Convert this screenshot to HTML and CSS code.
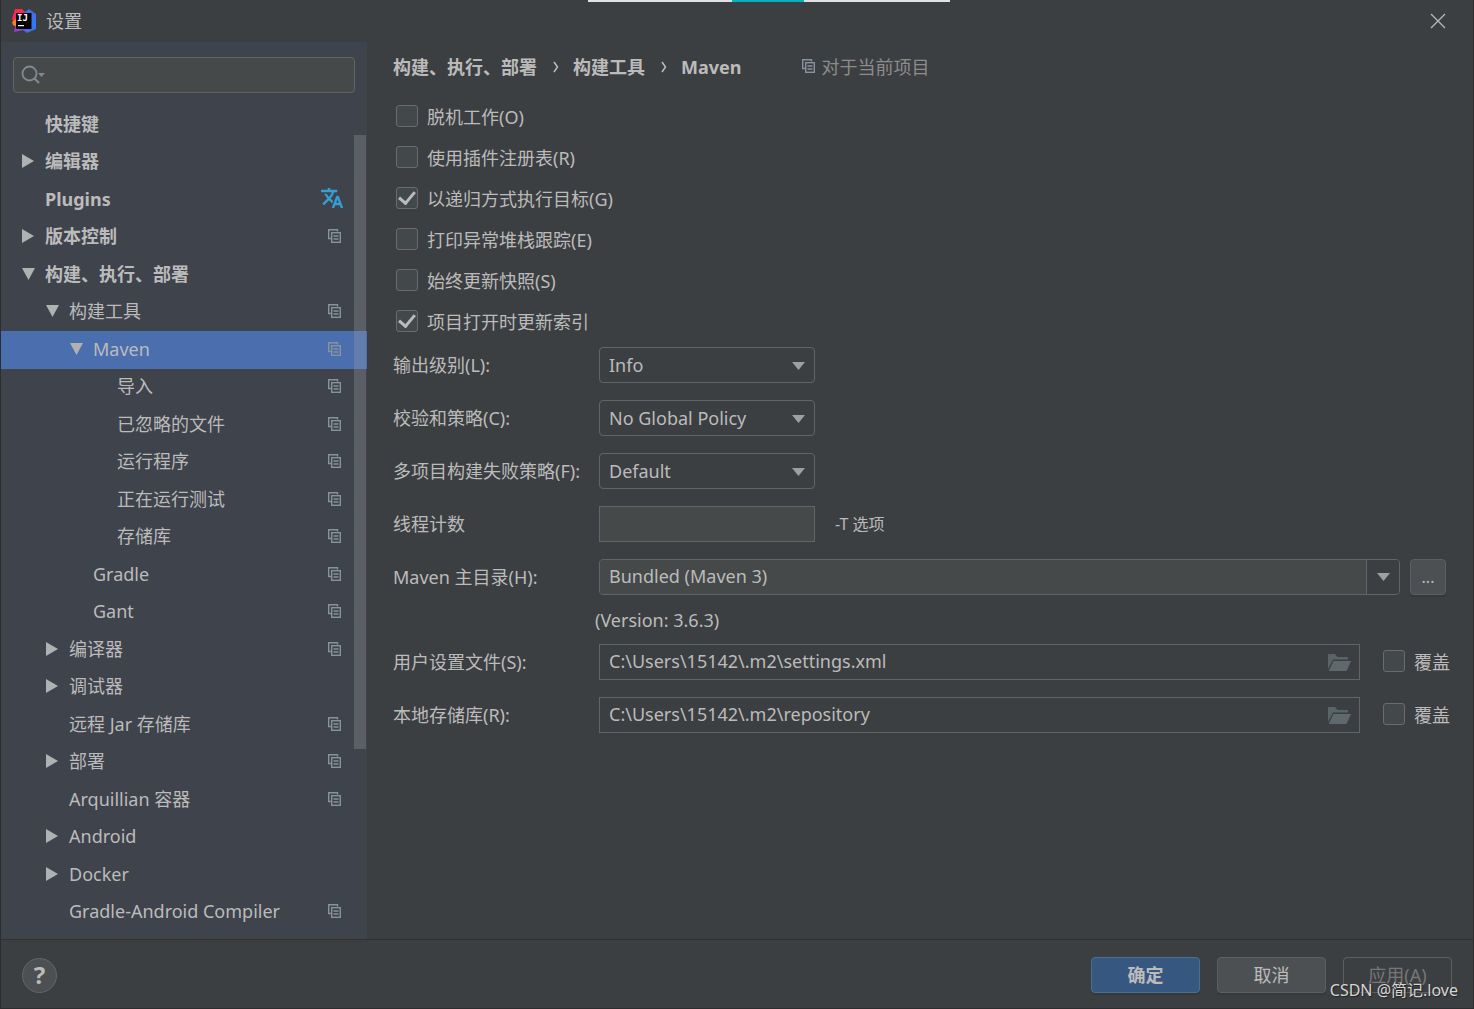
FILE: index.html
```html
<!DOCTYPE html>
<html lang="zh-CN">
<head>
    <meta charset="UTF-8">
    <meta name="viewport" content="width=device-width, initial-scale=1.0">
    <title>设置</title>
    <link rel="stylesheet" href="styles.css">
</head>
<body>

<svg class="sprite" aria-hidden="true">
    <symbol id="right" viewBox="0 0 13 14"><path d="M0 0L12 7L0 14Z" fill="#afb1b3"/></symbol>
    <symbol id="down" viewBox="0 0 13 14"><path d="M0 1H13L6.500 13Z" fill="#afb1b3"/></symbol>
    <symbol id="caret" viewBox="0 0 13 8"><path d="M0 0H13L6.500 8Z" fill="#9da0a3"/></symbol>
    <symbol id="copy" viewBox="0 0 13 14">
        <path d="M3.500 9.500H.7V.7H9.500V2.500" fill="none" stroke="#87939a" stroke-width="1.400"/>
        <rect x="3.700" y="3.700" width="8.600" height="9.600" fill="none" stroke="#87939a" stroke-width="1.400"/>
        <path d="M5.500 7H10.500M5.500 10H10.500" stroke="#87939a" stroke-width="1.300"/>
    </symbol>
    <symbol id="folder" viewBox="0 0 23 17">
        <path d="M0 15V0H7L9.500 3H20V5.500H5Z" fill="#596467"/>
        <path d="M5.500 7H23L18.500 17H.7Z" fill="#5f696c"/>
    </symbol>
</svg>

<div class="dialog">
    <header class="titlebar">
        <svg class="logo" viewBox="0 0 24 24">
            <defs>
                <linearGradient id="blue" x1="0" y1="1" x2="1" y2="0">
                    <stop offset="0" stop-color="#c02fc0"/>
                    <stop offset="0.400" stop-color="#3f6cf0"/>
                    <stop offset="0.700" stop-color="#2f7cf6"/>
                    <stop offset="1" stop-color="#5b5be8"/>
                </linearGradient>
            </defs>
            <path d="M12 4L17 0L24 5V20L15 24L11 21L2 23L4 15Z" fill="url(#blue)"/>
            <path d="M3 0H10L14 4L5 17L0 10Z" fill="#fe2857"/>
            <path d="M0 13L5 9V18L1 16Z" fill="#fc801d"/>
            <rect x="4" y="4" width="15.500" height="16" fill="#000"/>
            <text x="5" y="12" class="logo-text">IJ</text>
            <rect x="6" y="16" width="6" height="1.200" fill="#fff"/>
        </svg>
        <h1>设置</h1>
        <button class="close" aria-label="关闭">
            <svg width="16" height="16" viewBox="0 0 16 16"><path d="M1 1L15 15M15 1L1 15" stroke="#b4b6b8" stroke-width="1.400"/></svg>
        </button>
    </header>

    <div class="content">
        <aside class="sidebar">
            <div class="search">
                <svg width="25" height="20" viewBox="0 0 25 20">
                    <circle cx="8.500" cy="8.500" r="7" fill="none" stroke="#7f8b91" stroke-width="1.800"/>
                    <path d="M13 13L18 18" stroke="#7f8b91" stroke-width="2.200"/>
                    <path d="M17 8H24L20.500 12Z" fill="#7f8b91"/>
                </svg>
                <input type="text" id="search" aria-label="搜索">
            </div>
            <ul class="tree">
                <li class="bold"><i class="arrow"></i><span>快捷键</span></li>
                <li class="bold"><svg class="arrow"><use href="#right"/></svg><span>编辑器</span></li>
                <li class="bold"><i class="arrow"></i><span>Plugins</span>
                    <svg class="lang" viewBox="1 2 22 20"><path d="M12.870 15.070l-2.540-2.510.03-.03c1.740-1.940 2.980-4.170 3.710-6.530H17V4h-7V2H8v2H1v1.990h11.170C11.500 7.920 10.440 9.750 9 11.350 8.070 10.320 7.300 9.190 6.690 8h-2c.73 1.630 1.730 3.170 2.980 4.560l-5.090 5.020L4 19l5-5 3.110 3.110.76-2.040zM18.500 10h-2L12 22h2l1.120-3h4.750L21 22h2l-4.500-12zm-2.620 7l1.620-4.330L19.120 17h-3.240z"/></svg>
                </li>
                <li class="bold"><svg class="arrow"><use href="#right"/></svg><span>版本控制</span><svg class="copy"><use href="#copy"/></svg></li>
                <li class="bold"><svg class="arrow"><use href="#down"/></svg><span>构建、执行、部署</span></li>
                <li class="level-1"><svg class="arrow"><use href="#down"/></svg><span>构建工具</span><svg class="copy"><use href="#copy"/></svg></li>
                <li class="level-2 selected"><svg class="arrow"><use href="#down"/></svg><span>Maven</span><svg class="copy"><use href="#copy"/></svg></li>
                <li class="level-3"><i class="arrow"></i><span>导入</span><svg class="copy"><use href="#copy"/></svg></li>
                <li class="level-3"><i class="arrow"></i><span>已忽略的文件</span><svg class="copy"><use href="#copy"/></svg></li>
                <li class="level-3"><i class="arrow"></i><span>运行程序</span><svg class="copy"><use href="#copy"/></svg></li>
                <li class="level-3"><i class="arrow"></i><span>正在运行测试</span><svg class="copy"><use href="#copy"/></svg></li>
                <li class="level-3"><i class="arrow"></i><span>存储库</span><svg class="copy"><use href="#copy"/></svg></li>
                <li class="level-2"><i class="arrow"></i><span>Gradle</span><svg class="copy"><use href="#copy"/></svg></li>
                <li class="level-2"><i class="arrow"></i><span>Gant</span><svg class="copy"><use href="#copy"/></svg></li>
                <li class="level-1"><svg class="arrow"><use href="#right"/></svg><span>编译器</span><svg class="copy"><use href="#copy"/></svg></li>
                <li class="level-1"><svg class="arrow"><use href="#right"/></svg><span>调试器</span></li>
                <li class="level-1"><i class="arrow"></i><span>远程 Jar 存储库</span><svg class="copy"><use href="#copy"/></svg></li>
                <li class="level-1"><svg class="arrow"><use href="#right"/></svg><span>部署</span><svg class="copy"><use href="#copy"/></svg></li>
                <li class="level-1"><i class="arrow"></i><span>Arquillian 容器</span><svg class="copy"><use href="#copy"/></svg></li>
                <li class="level-1"><svg class="arrow"><use href="#right"/></svg><span>Android</span></li>
                <li class="level-1"><svg class="arrow"><use href="#right"/></svg><span>Docker</span></li>
                <li class="level-1"><i class="arrow"></i><span>Gradle-Android Compiler</span><svg class="copy"><use href="#copy"/></svg></li>
            </ul>
            <div class="scrollbar"></div>
        </aside>

        <main class="main">
            <div class="breadcrumb">
                <span>构建、执行、部署</span>
                <svg class="sep" viewBox="0 0 6 12"><path d="M1 1L4.500 6L1 11" /></svg>
                <span>构建工具</span>
                <svg class="sep" viewBox="0 0 6 12"><path d="M1 1L4.500 6L1 11" /></svg>
                <span>Maven</span>
                <span class="scope"><svg class="copy"><use href="#copy"/></svg>对于当前项目</span>
            </div>

            <div class="checks">
                <label class="check"><input type="checkbox">脱机工作(O)</label>
                <label class="check"><input type="checkbox">使用插件注册表(R)</label>
                <label class="check"><input type="checkbox" checked>以递归方式执行目标(G)</label>
                <label class="check"><input type="checkbox">打印异常堆栈跟踪(E)</label>
                <label class="check"><input type="checkbox">始终更新快照(S)</label>
                <label class="check"><input type="checkbox" checked>项目打开时更新索引</label>
            </div>

            <div class="field">
                <label for="output">输出级别(L):</label>
                <div class="select">
                    <select id="output"><option>Info</option></select>
                    <svg class="caret"><use href="#caret"/></svg>
                </div>
            </div>
            <div class="field">
                <label for="checksum">校验和策略(C):</label>
                <div class="select">
                    <select id="checksum"><option>No Global Policy</option></select>
                    <svg class="caret"><use href="#caret"/></svg>
                </div>
            </div>
            <div class="field">
                <label for="fail">多项目构建失败策略(F):</label>
                <div class="select">
                    <select id="fail"><option>Default</option></select>
                    <svg class="caret"><use href="#caret"/></svg>
                </div>
            </div>
            <div class="field">
                <label for="threads">线程计数</label>
                <input type="text" id="threads" class="threads">
                <span class="note">-T 选项</span>
            </div>
            <div class="field">
                <label for="home">Maven 主目录(H):</label>
                <div class="combo">
                    <input type="text" id="home" value="Bundled (Maven 3)">
                    <button aria-label="展开"><svg class="caret"><use href="#caret"/></svg></button>
                </div>
                <button class="browse">...</button>
            </div>
            <p class="version">(Version: 3.6.3)</p>
            <div class="field">
                <label for="settings">用户设置文件(S):</label>
                <div class="path">
                    <input type="text" id="settings" value="C:\Users\15142\.m2\settings.xml">
                    <svg class="folder"><use href="#folder"/></svg>
                </div>
                <label class="check"><input type="checkbox">覆盖</label>
            </div>
            <div class="field">
                <label for="repo">本地存储库(R):</label>
                <div class="path">
                    <input type="text" id="repo" value="C:\Users\15142\.m2\repository">
                    <svg class="folder"><use href="#folder"/></svg>
                </div>
                <label class="check"><input type="checkbox">覆盖</label>
            </div>
        </main>
    </div>

    <footer class="footer">
        <button class="help">?</button>
        <button class="btn primary">确定</button>
        <button class="btn">取消</button>
        <button class="btn" disabled>应用(A)</button>
    </footer>

    <div class="strip"></div>
    <div class="watermark">CSDN @简记.love</div>
</div>

</body>
</html>
```

FILE: styles.css
```css
* {
    box-sizing: border-box;
}
body {
    margin: 0;
    background-color: #3c3f41;
    color: #bbbbbb;
    font-family: "Noto Sans", "Noto Sans CJK SC", sans-serif;
    font-size: 18px;
    line-height: 24px;
}
input, select, button {
    margin: 0;
    color: inherit;
    font: inherit;
}
svg {
    display: block;
    flex: none;
}
.sprite {
    position: absolute;
    width: 0;
    height: 0;
}
.dialog {
    position: relative;
    display: flex;
    flex-direction: column;
    min-height: 100vh;
    border: 1px solid #2b2d2e;
    border-top: 0;
}

/* title */
.titlebar {
    display: flex;
    align-items: center;
    height: 42px;
    padding: 0 27px 0 11px;
}
.titlebar h1 {
    flex: 1;
    margin: 0 0 0 10px;
    font-size: 18px;
    font-weight: normal;
}
.logo {
    width: 24px;
    height: 24px;
}
.logo-text {
    fill: #fff;
    font: bold 9px "DejaVu Sans Mono", monospace;
}
.close {
    padding: 0;
    border: 0;
    background: none;
}

.content {
    flex: 1;
    display: flex;
}

/* sidebar */
.sidebar {
    position: relative;
    display: flex;
    flex-direction: column;
    width: 366px;
    padding: 15px 0 8px;
    background-color: #3f434c;
}
.search {
    display: flex;
    align-items: center;
    height: 36px;
    margin: 0 12px 13px;
    padding-left: 7px;
    border: 1px solid #646464;
    border-radius: 4px;
    background-color: #45494a;
}
.search input {
    flex: 1;
    min-width: 0;
    border: 0;
    outline: none;
    background: none;
}
.tree {
    flex: 1;
    display: flex;
    flex-direction: column;
    margin: 0;
    padding: 0;
    list-style: none;
}
.tree li {
    flex: 1;
    display: flex;
    align-items: center;
    padding: 0 26px 0 21px;
}
.tree span {
    flex: 1;
    margin-bottom: 2px;
    white-space: nowrap;
}
.tree .bold {
    font-weight: bold;
}
.tree .level-1 {
    padding-left: 45px;
}
.tree .level-2 {
    padding-left: 69px;
}
.tree .level-3 {
    padding-left: 93px;
}
.tree .selected {
    background-color: #4b6eaf;
}
.arrow {
    width: 13px;
    height: 14px;
    margin: 0 10px 2px 0;
}
.copy {
    width: 13px;
    height: 14px;
    margin-bottom: 2px;
}
.lang {
    width: 22px;
    height: 20px;
    margin: 0 -2px 3px 0;
    fill: #389fd6;
    stroke: #389fd6;
    stroke-width: 0.5;
}
.scrollbar {
    position: absolute;
    top: 93px;
    right: 1px;
    width: 12px;
    height: 614px;
    background-color: rgba(166, 166, 166, 0.28);
}

/* settings */
.main {
    flex: 1;
    min-width: 0;
    padding: 13px 23px 0 26px;
}
.breadcrumb {
    display: flex;
    align-items: center;
    margin-bottom: 17px;
    font-weight: bold;
}
.sep {
    width: 6px;
    height: 12px;
    margin: 0 14px 0 16px;
    fill: none;
    stroke: #bbbbbb;
    stroke-width: 1.5;
}
.scope {
    display: flex;
    align-items: center;
    gap: 6px;
    margin-left: 61px;
    color: #8c8c8c;
    font-weight: normal;
}
.checks {
    padding-left: 3px;
    margin-bottom: 5px;
}
.check {
    display: flex;
    align-items: center;
    gap: 9px;
    white-space: nowrap;
}
.checks .check {
    height: 41px;
}
.check input {
    appearance: none;
    display: grid;
    place-items: center;
    width: 22px;
    height: 22px;
    margin-bottom: 2px;
    border: 1px solid #6b6b6b;
    border-radius: 3px;
    background-color: #43494a;
}
.check input:checked::after {
    content: "";
    width: 7px;
    height: 13px;
    margin-bottom: 3px;
    border: solid #bbbbbb;
    border-width: 0 3px 3px 0;
    transform: rotate(40deg);
}
.field {
    display: flex;
    align-items: center;
    height: 36px;
    margin-bottom: 17px;
}
.field > label:first-child {
    width: 206px;
    white-space: nowrap;
}
.select {
    position: relative;
    width: 216px;
}
.select select {
    appearance: none;
    width: 100%;
    height: 36px;
    padding: 0 32px 0 9px;
    border: 1px solid #646464;
    border-radius: 4px;
    background-color: #3c3f41;
}
.caret {
    width: 13px;
    height: 8px;
}
.select .caret {
    position: absolute;
    top: 15px;
    right: 10px;
    pointer-events: none;
}
.threads {
    width: 216px;
    height: 36px;
    border: 1px solid #646464;
    background-color: #45494a;
}
.note {
    margin-left: 20px;
    font-size: 16px;
}
.combo {
    flex: 1;
    display: flex;
    height: 36px;
    border: 1px solid #646464;
    border-radius: 4px;
    overflow: hidden;
}
.combo input {
    flex: 1;
    min-width: 0;
    padding: 0 9px 3px;
    border: 0;
    background-color: #45494a;
}
.combo button {
    display: grid;
    place-items: center;
    width: 33px;
    padding: 0;
    border: 0;
    border-left: 1px solid #646464;
    background-color: #3c3f41;
}
.browse {
    width: 36px;
    height: 36px;
    margin: 0 4px 0 10px;
    padding: 0;
    border: 1px solid #5e6060;
    border-radius: 4px;
    background-color: #4c5052;
    box-shadow: 0 2px 1px rgba(0, 0, 0, 0.1);
    font-size: 16px;
}
.version {
    margin: -4px 0 12px 202px;
}
.path {
    position: relative;
    flex: 1;
    margin-right: 23px;
}
.path input {
    display: block;
    width: 100%;
    height: 36px;
    padding: 0 40px 3px 9px;
    border: 1px solid #646464;
    background-color: #3c3f41;
}
.folder {
    position: absolute;
    top: 10px;
    right: 9px;
    width: 23px;
    height: 17px;
}

/* buttons */
.footer {
    display: flex;
    align-items: center;
    gap: 17px;
    height: 69px;
    padding: 2px 21px 0;
    border-top: 1px solid #323232;
}
.help {
    width: 35px;
    height: 35px;
    margin-right: auto;
    padding: 0;
    border: 1px solid #646666;
    border-radius: 50%;
    background-color: #4c5052;
    font-size: 24px;
    font-weight: bold;
}
.btn {
    width: 109px;
    height: 36px;
    padding: 0;
    border: 1px solid #5e6060;
    border-radius: 4px;
    background-color: #4c5052;
    box-shadow: 0 2px 1px rgba(0, 0, 0, 0.1);
}
.btn.primary {
    border-color: #4c708c;
    background-color: #365880;
    font-weight: bold;
}
.btn:disabled {
    background: none;
    box-shadow: none;
    color: #777777;
}
.strip {
    position: absolute;
    top: 0;
    left: 587px;
    width: 362px;
    height: 2px;
    background: linear-gradient(to right, #dfe1e2 144px, #00b2c2 144px, #00b2c2 216px, #dfe1e2 216px);
}
.watermark {
    position: absolute;
    right: 15px;
    bottom: 6px;
    color: #d5d5d5;
    font-size: 16px;
    text-shadow: 1px 1px 1px #222222;
}
```
